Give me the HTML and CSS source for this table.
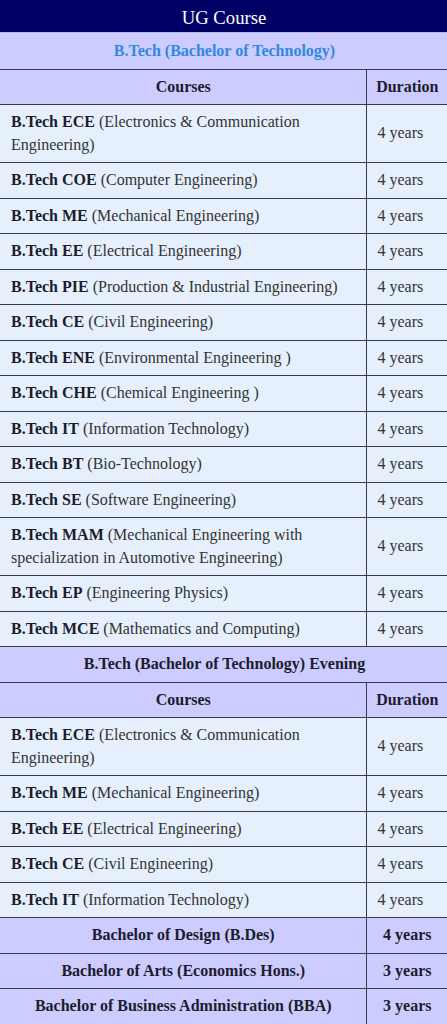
FILE: index.html
```html
<!DOCTYPE html>
<html>
<head>
<meta charset="utf-8">
<link rel="stylesheet" href="styles.css">
</head>
<body>
<table class="courses">
  <colgroup><col class="c1"><col class="c2"></colgroup>
  <tr><th colspan="2" class="title">UG Course</th></tr>
  <tr><th colspan="2" class="sub blue">B.Tech (Bachelor of Technology)</th></tr>
  <tr><th class="head">Courses</th><th class="head">Duration</th></tr>
  <tr><td><b>B.Tech ECE</b> (Electronics &amp; Communication Engineering)</td><td class="dur">4 years</td></tr>
  <tr><td><b>B.Tech COE</b> (Computer Engineering)</td><td class="dur">4 years</td></tr>
  <tr><td><b>B.Tech ME</b> (Mechanical Engineering)</td><td class="dur">4 years</td></tr>
  <tr><td><b>B.Tech EE</b> (Electrical Engineering)</td><td class="dur">4 years</td></tr>
  <tr><td><b>B.Tech PIE</b> (Production &amp; Industrial Engineering)</td><td class="dur">4 years</td></tr>
  <tr><td><b>B.Tech CE</b> (Civil Engineering)</td><td class="dur">4 years</td></tr>
  <tr><td><b>B.Tech ENE</b> (Environmental Engineering )</td><td class="dur">4 years</td></tr>
  <tr><td><b>B.Tech CHE</b> (Chemical Engineering )</td><td class="dur">4 years</td></tr>
  <tr><td><b>B.Tech IT</b> (Information Technology)</td><td class="dur">4 years</td></tr>
  <tr><td><b>B.Tech BT</b> (Bio-Technology)</td><td class="dur">4 years</td></tr>
  <tr><td><b>B.Tech SE</b> (Software Engineering)</td><td class="dur">4 years</td></tr>
  <tr><td><b>B.Tech MAM</b> (Mechanical Engineering with specialization in Automotive Engineering)</td><td class="dur">4 years</td></tr>
  <tr><td><b>B.Tech EP</b> (Engineering Physics)</td><td class="dur">4 years</td></tr>
  <tr><td><b>B.Tech MCE</b> (Mathematics and Computing)</td><td class="dur">4 years</td></tr>
  <tr><th colspan="2" class="sub">B.Tech (Bachelor of Technology) Evening</th></tr>
  <tr><th class="head">Courses</th><th class="head">Duration</th></tr>
  <tr><td><b>B.Tech ECE</b> (Electronics &amp; Communication Engineering)</td><td class="dur">4 years</td></tr>
  <tr><td><b>B.Tech ME</b> (Mechanical Engineering)</td><td class="dur">4 years</td></tr>
  <tr><td><b>B.Tech EE</b> (Electrical Engineering)</td><td class="dur">4 years</td></tr>
  <tr><td><b>B.Tech CE</b> (Civil Engineering)</td><td class="dur">4 years</td></tr>
  <tr><td><b>B.Tech IT</b> (Information Technology)</td><td class="dur">4 years</td></tr>
  <tr><th class="head">Bachelor of Design (B.Des)</th><th class="head">4 years</th></tr>
  <tr><th class="head">Bachelor of Arts (Economics Hons.)</th><th class="head">3 years</th></tr>
  <tr><th class="head">Bachelor of Business Administration (BBA)</th><th class="head">3 years</th></tr>
</table>
</body>
</html>
```
FILE: styles.css
```css
html, body {
  margin: 0;
  padding: 0;
  background: #ffffff;
}
body,
.courses,
.courses th,
.courses td,
.courses b {
  font-family: "Liberation Serif", "Times New Roman", "DejaVu Serif", serif;
}
body {
  font-size: 16px;
  color: #333333;
  overflow: hidden;
}
.courses {
  border-collapse: collapse;
  width: 448px;
  table-layout: fixed;
}
.c1 { width: 366px; }
.c2 { width: 82px; }
.courses th,
.courses td {
  border: 1px solid #3a3a4a;
  padding: 6px 10px;
  line-height: 22.5px;
  vertical-align: middle;
}
.courses tr > :first-child {
  border-left: none;
  padding-left: 11px;
}
.courses tr > :last-child {
  border-right: none;
}
.courses td {
  background: #e6f0fc;
  text-align: left;
}
.courses td b {
  color: #1c1c2e;
}
.courses td.dur {
  padding-left: 11px;
  padding-right: 4px;
}
.courses th {
  background: #ccccff;
  color: #1c1c2e;
  font-weight: bold;
  text-align: center;
}
.courses th.title {
  background: #000066;
  color: #ffffff;
  font-weight: normal;
  font-size: 18.7px;
  padding: 6px 10px 3px;
  line-height: 23px;
  border: none;
  border-bottom: 1px solid #b8b8e8;
}
.courses th.blue {
  color: #3388e0;
  border-top: none;
  padding-top: 7px;
}
.courses th.head + th.head {
  padding-left: 4px;
  padding-right: 4px;
}
```
